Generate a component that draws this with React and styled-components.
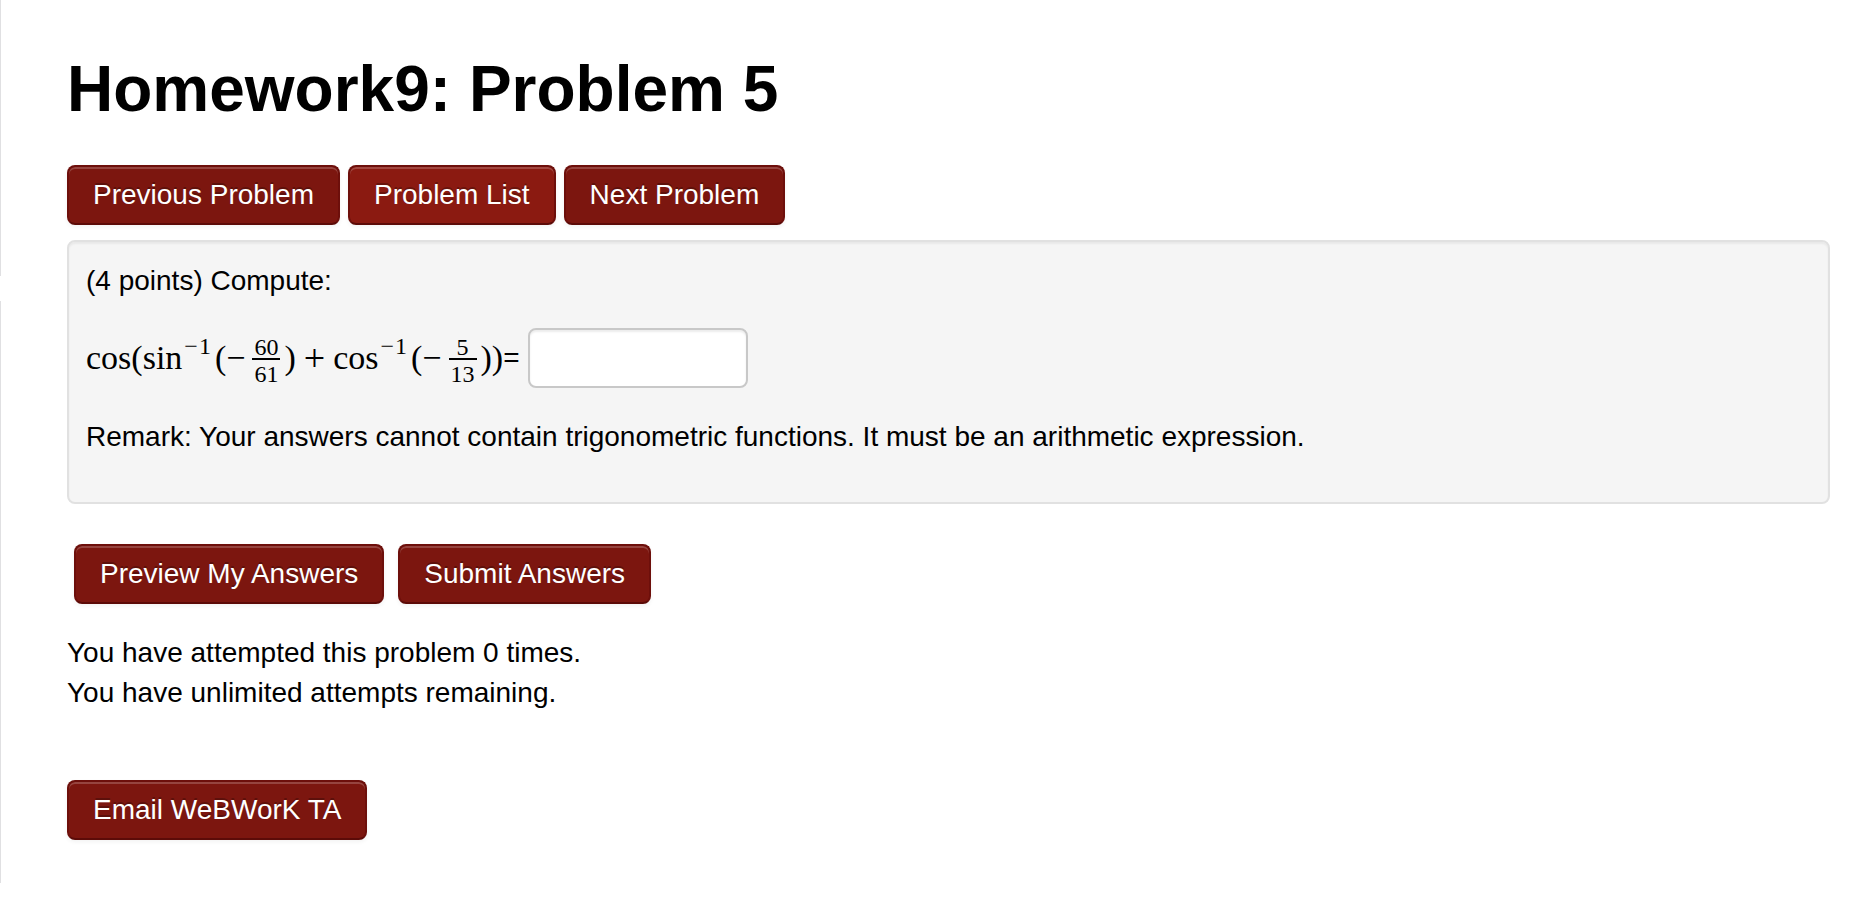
import styled, { createGlobalStyle } from "styled-components";

const GlobalStyle = createGlobalStyle`
  body {
    margin: 0;
    background: #fff;
    color: #000;
    font-family: "Liberation Sans", Arial, sans-serif;
    font-size: 28px;
    line-height: 40px;
  }
`;

const Page = styled.div`
  display: flex;
  align-items: stretch;
  min-height: 100vh;
`;

const Edge = styled.div`
  display: flex;
  flex-direction: column;
  gap: 25px;
  width: 1px;
  padding-bottom: 23px;
`;

const EdgeLine = styled.span`
  background: #e0e0e2;
  flex: ${(props) => (props.$grow ? "1" : "0 0 276px")};
`;

const Main = styled.main`
  flex: 1;
  min-width: 0;
  padding: 49px 36px 0 66px;
`;

const Title = styled.h1`
  margin: 0;
  font-size: 64px;
  line-height: 80px;
  font-weight: bold;
`;

const Nav = styled.nav`
  display: flex;
  flex-wrap: wrap;
  gap: 8px;
  margin-top: 36px;
`;

const Button = styled.button`
  padding: 8px 24px;
  border: 2px solid;
  border-color: #6d0f0b #6d0f0b #5c0b08;
  border-radius: 8px;
  background: ${(props) => (props.$light ? "#8b1a11" : "#7c160f")};
  box-shadow: inset 0 2px 0 rgba(255, 255, 255, 0.2), 0 2px 4px rgba(0, 0, 0, 0.05);
  color: #fff;
  font: inherit;
  text-shadow: 0 -2px 0 rgba(0, 0, 0, 0.25);
  cursor: pointer;
`;

const Well = styled.section`
  margin-top: 15px;
  padding: 19px 17px 45px;
  border: 2px solid #e1e1e1;
  border-radius: 8px;
  background: #f5f5f5;
  box-shadow: inset 0 2px 2px rgba(0, 0, 0, 0.05);
`;

const Text = styled.p`
  margin: 0;
`;

const Equation = styled.div`
  display: flex;
  align-items: center;
  margin: 27px 0 29px;
`;

const Formula = styled.span`
  display: flex;
  align-items: center;
  font-family: "Liberation Serif", "Times New Roman", serif;
  font-size: 34px;
`;

const Power = styled.sup`
  display: flex;
  gap: 1px;
  padding: 0 4px 24px 2px;
  font-size: 24px;
  line-height: 36px;
  vertical-align: baseline;
`;

const Plus = styled.span`
  padding: 0 8px;
  font-size: 38px;
`;

const FractionBox = styled.span`
  display: flex;
  flex-direction: column;
  min-width: 28px;
  margin: 0 4px 0 7px;
  font-size: 24px;
  text-align: center;
`;

const Numerator = styled.span`
  padding-top: 8px;
  border-bottom: 2px solid #000;
  line-height: 22px;
`;

const Denominator = styled.span`
  line-height: 28px;
`;

const AnswerInput = styled.input`
  box-sizing: border-box;
  width: 220px;
  height: 60px;
  margin: 0 0 0 8px;
  padding: 8px 12px;
  border: 2px solid #c8c8c8;
  border-radius: 8px;
  background: #fff;
  box-shadow: inset 0 2px 2px rgba(0, 0, 0, 0.075);
  font: inherit;
`;

const Actions = styled.div`
  display: flex;
  flex-wrap: wrap;
  gap: 14px;
  margin: 40px 0 29px;
  padding-left: 7px;
`;

const Contact = styled.div`
  margin-top: 67px;
`;

const Fraction = ({ top, bottom }) => (
  <FractionBox>
    <Numerator>{top}</Numerator>
    <Denominator>{bottom}</Denominator>
  </FractionBox>
);

const Inverse = () => (
  <Power>
    <span>−</span>
    <span>1</span>
  </Power>
);

const App = () => {
  return (
    <Page>
      <GlobalStyle />
      <Edge>
        <EdgeLine />
        <EdgeLine $grow />
      </Edge>
      <Main>
        <Title>Homework9: Problem 5</Title>
        <Nav>
          <Button type="button">Previous Problem</Button>
          <Button type="button" $light>Problem List</Button>
          <Button type="button">Next Problem</Button>
        </Nav>
        <form onSubmit={(e) => e.preventDefault()}>
          <Well>
            <Text>(4 points) Compute:</Text>
            <Equation>
              <Formula id="formula">
                cos(sin
                <Inverse />
                (−
                <Fraction top="60" bottom="61" />
                )
                <Plus>+</Plus>
                cos
                <Inverse />
                (−
                <Fraction top="5" bottom="13" />
                ))
              </Formula>
              <span>=</span>
              <AnswerInput type="text" aria-labelledby="formula" />
            </Equation>
            <Text>
              Remark: Your answers cannot contain trigonometric functions. It must be an arithmetic expression.
            </Text>
          </Well>
          <Actions>
            <Button type="button">Preview My Answers</Button>
            <Button type="submit">Submit Answers</Button>
          </Actions>
        </form>
        <Text>You have attempted this problem 0 times.</Text>
        <Text>You have unlimited attempts remaining.</Text>
        <Contact>
          <Button type="button">Email WeBWorK TA</Button>
        </Contact>
      </Main>
    </Page>
  );
};

export default App;
